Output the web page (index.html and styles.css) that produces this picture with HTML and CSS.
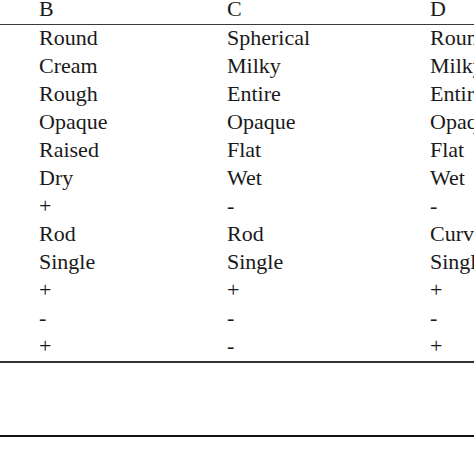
FILE: index.html
```html
<!DOCTYPE html>
<html>
<head>
<meta charset="utf-8">
<link rel="stylesheet" href="styles.css">
</head>
<body>
<div class="table">
  <div class="row head">
    <div class="c1">B</div><div class="c2">C</div><div class="c3">D</div>
  </div>
  <div class="body">
    <div class="row"><div class="c1">Round</div><div class="c2">Spherical</div><div class="c3">Round</div></div>
    <div class="row"><div class="c1">Cream</div><div class="c2">Milky</div><div class="c3">Milky</div></div>
    <div class="row"><div class="c1">Rough</div><div class="c2">Entire</div><div class="c3">Entire</div></div>
    <div class="row"><div class="c1">Opaque</div><div class="c2">Opaque</div><div class="c3">Opaque</div></div>
    <div class="row"><div class="c1">Raised</div><div class="c2">Flat</div><div class="c3">Flat</div></div>
    <div class="row"><div class="c1">Dry</div><div class="c2">Wet</div><div class="c3">Wet</div></div>
    <div class="row"><div class="c1">+</div><div class="c2">-</div><div class="c3">-</div></div>
    <div class="row"><div class="c1">Rod</div><div class="c2">Rod</div><div class="c3">Curved</div></div>
    <div class="row"><div class="c1">Single</div><div class="c2">Single</div><div class="c3">Single</div></div>
    <div class="row"><div class="c1">+</div><div class="c2">+</div><div class="c3">+</div></div>
    <div class="row"><div class="c1">-</div><div class="c2">-</div><div class="c3">-</div></div>
    <div class="row"><div class="c1">+</div><div class="c2">-</div><div class="c3">+</div></div>
  </div>
  <div class="foot"></div>
</div>
</body>
</html>
```

FILE: styles.css
```css
html, body {
  margin: 0;
  padding: 0;
  background: #fff;
  overflow: hidden;
}
.table {
  margin-top: -4px;
  font-family: "Liberation Serif", "Times New Roman", serif;
  font-size: 22px;
  color: #1a1a1a;
}
.row {
  display: grid;
  grid-template-columns: 188px 203px 1fr;
  padding-left: 39px;
  line-height: 26px;
  padding-bottom: 2px;
  white-space: nowrap;
  overflow: hidden;
}
.head {
  border-bottom: 1px solid #3a3a3a;
}
.body {
  border-bottom: 2px solid #333;
}
.foot {
  height: 72px;
  border-bottom: 2px solid #111;
}
```
